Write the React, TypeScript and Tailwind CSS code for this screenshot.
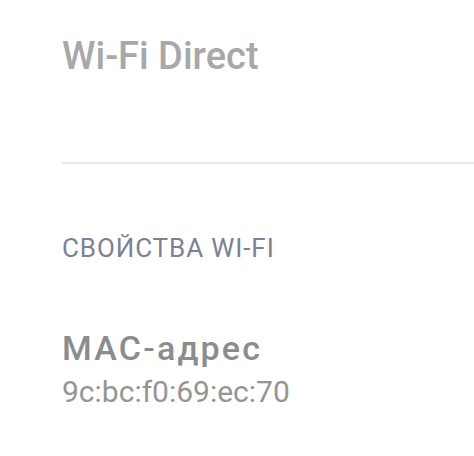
export default function App() {
  return (
    <div className="w-[474px] h-[456px] bg-white overflow-hidden" style={{ fontFamily: "Roboto, 'Noto Sans', sans-serif" }}>
      <div className="pl-[62px] pt-[35px]">
        <div className="text-[38px] leading-[42px] font-medium text-[#a8a8a8] tracking-[0px]">Wi-Fi Direct</div>
      </div>
      <div className="ml-[62px] mt-[85px] h-[2px] bg-[#e8e8e8]" />
      <div className="pl-[62px] mt-[69px]">
        <div className="text-[26px] leading-[30px] text-[#7d8193] tracking-[0.9px]">СВОЙСТВА WI-FI</div>
      </div>
      <div className="pl-[62px] mt-[66px]">
        <div className="text-[34px] leading-[38px] font-medium text-[#8c8c8c] tracking-[2.2px]">MAC-адрес</div>
        <div className="text-[30px] leading-[32px] text-[#959595] mt-[9px]">9c:bc:f0:69:ec:70</div>
      </div>
    </div>
  );
}
